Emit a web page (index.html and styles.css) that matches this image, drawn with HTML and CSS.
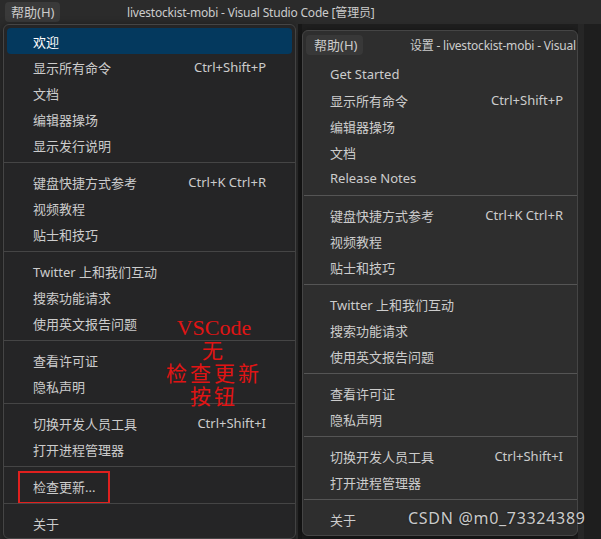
FILE: index.html
```html
<!DOCTYPE html>
<html lang="zh-CN">
<head>
  <meta charset="UTF-8">
  <title>帮助菜单对比</title>
  <link rel="stylesheet" href="styles.css">
</head>
<body>

  <div class="titlebar">
    <span class="menu-btn">帮助(H)</span>
    <span class="title">livestockist-mobi - Visual Studio Code [管理员]</span>
  </div>

  <div class="main">
    <div class="menu menu-left">
      <div class="item active"><span>欢迎</span></div>
      <div class="item"><span>显示所有命令</span><span class="key">Ctrl+Shift+P</span></div>
      <div class="item"><span>文档</span></div>
      <div class="item"><span>编辑器操场</span></div>
      <div class="item"><span>显示发行说明</span></div>
      <div class="sep"></div>
      <div class="item"><span>键盘快捷方式参考</span><span class="key">Ctrl+K Ctrl+R</span></div>
      <div class="item"><span>视频教程</span></div>
      <div class="item"><span>贴士和技巧</span></div>
      <div class="sep"></div>
      <div class="item"><span>Twitter 上和我们互动</span></div>
      <div class="item"><span>搜索功能请求</span></div>
      <div class="item"><span>使用英文报告问题</span></div>
      <div class="sep"></div>
      <div class="item"><span>查看许可证</span></div>
      <div class="item"><span>隐私声明</span></div>
      <div class="sep"></div>
      <div class="item"><span>切换开发人员工具</span><span class="key">Ctrl+Shift+I</span></div>
      <div class="item"><span>打开进程管理器</span></div>
      <div class="sep"></div>
      <div class="item marked"><span>检查更新...</span></div>
      <div class="sep"></div>
      <div class="item"><span>关于</span></div>
    </div>

    <div class="window">
      <div class="strip"></div>
      <div class="menu menu-right">
        <div class="menu-head">
          <span class="menu-btn">帮助(H)</span>
          <span class="title">设置 - livestockist-mobi - Visual</span>
        </div>
        <div class="item"><span>Get Started</span></div>
        <div class="item"><span>显示所有命令</span><span class="key">Ctrl+Shift+P</span></div>
        <div class="item"><span>编辑器操场</span></div>
        <div class="item"><span>文档</span></div>
        <div class="item"><span>Release Notes</span></div>
        <div class="sep"></div>
        <div class="item"><span>键盘快捷方式参考</span><span class="key">Ctrl+K Ctrl+R</span></div>
        <div class="item"><span>视频教程</span></div>
        <div class="item"><span>贴士和技巧</span></div>
        <div class="sep"></div>
        <div class="item"><span>Twitter 上和我们互动</span></div>
        <div class="item"><span>搜索功能请求</span></div>
        <div class="item"><span>使用英文报告问题</span></div>
        <div class="sep"></div>
        <div class="item"><span>查看许可证</span></div>
        <div class="item"><span>隐私声明</span></div>
        <div class="sep"></div>
        <div class="item"><span>切换开发人员工具</span><span class="key">Ctrl+Shift+I</span></div>
        <div class="item"><span>打开进程管理器</span></div>
        <div class="sep"></div>
        <div class="item"><span>关于</span></div>
      </div>
      <div class="editor-edge"></div>
    </div>
  </div>

  <div class="note">
    <div class="latin">VSCode</div>
    <div>无</div>
    <div>检查更新</div>
    <div>按钮</div>
  </div>

  <div class="watermark">CSDN @m0_73324389</div>

</body>
</html>
```

FILE: styles.css
```css
* {
  box-sizing: border-box;
}
body {
  margin: 0;
  width: 601px;
  height: 539px;
  overflow: hidden;
  background: #2b2b2b;
  color: #cccccc;
  font-family: "Noto Sans", "Noto Sans CJK SC", sans-serif;
  font-size: 13px;
  position: relative;
}
.titlebar {
  height: 24px;
  display: flex;
  align-items: center;
  padding-left: 5px;
  white-space: nowrap;
}
.menu-btn {
  background: #3a3a3a;
  border-radius: 4px;
  height: 20px;
  line-height: 20px;
  padding: 0 6px;
  width: 55px;
}
.title {
  font-size: 12px;
  letter-spacing: -0.2px;
}
.titlebar .title {
  margin-left: 67px;
}
.main {
  display: flex;
  height: 515px;
}
.menu {
  border: 1px solid #454545;
  border-radius: 6px;
  padding: 3px 3px;
}
.menu-left {
  width: 293px;
  margin-left: 3px;
  background: #252526;
  box-shadow: 0 2px 8px rgba(0, 0, 0, 0.5);
  flex: none;
}
.item {
  height: 26px;
  display: flex;
  align-items: center;
  justify-content: space-between;
  padding: 0 26px;
  border-radius: 4px;
  position: relative;
  white-space: nowrap;
}
.item.active {
  background: #04395e;
  color: #ffffff;
}
.sep {
  height: 11px;
  position: relative;
  margin: 0 -3px;
}
.sep::before {
  content: "";
  position: absolute;
  left: 0;
  right: 0;
  top: 4px;
  border-top: 1px solid #454545;
}
.marked::after {
  content: "";
  position: absolute;
  left: 11px;
  top: -2px;
  width: 88px;
  height: 29px;
  border: 2px solid #e0201e;
}
.window {
  flex: 1;
  display: flex;
  background: #1f1f1f;
  min-width: 0;
}
.strip {
  width: 6px;
  background: #2a2a2a;
  border-right: 4px solid #181818;
  flex: none;
}
.menu-right {
  width: 276px;
  flex: none;
  margin-top: 6px;
  margin-bottom: 3px;
  padding: 0 0 0 1px;
  background: #2e2e2e;
  box-shadow: 0 2px 8px rgba(0, 0, 0, 0.6);
  overflow: hidden;
}
.menu-head {
  height: 30px;
  padding: 3px 0 5px 2px;
  display: flex;
  align-items: center;
  white-space: nowrap;
}
.menu-head .menu-btn {
  background: #383838;
  width: 57px;
  padding-left: 8px;
}
.menu-head .title {
  margin-left: 47px;
}
.menu-right .item {
  padding: 0 14px 0 26px;
  border-radius: 0;
}
.menu-right .sep {
  margin: 0;
}
.menu-right .sep::before {
  border-top-color: #555555;
}
.editor-edge {
  flex: 1;
  background: #1e1e1e;
  border-left: 6px solid #262626;
}
.note {
  position: absolute;
  left: 158px;
  top: 316px;
  width: 112px;
  text-align: center;
  color: #e01414;
  font-size: 21px;
  line-height: 23px;
  letter-spacing: 3px;
}
.note .latin {
  font-family: "Liberation Serif", serif;
  font-size: 22px;
  letter-spacing: 0;
}
.watermark {
  position: absolute;
  left: 408px;
  top: 507px;
  font-size: 16px;
  letter-spacing: 0.7px;
  color: rgba(235, 235, 235, 0.85);
  text-shadow: 0 0 2px rgba(0, 0, 0, 0.5);
}
```
